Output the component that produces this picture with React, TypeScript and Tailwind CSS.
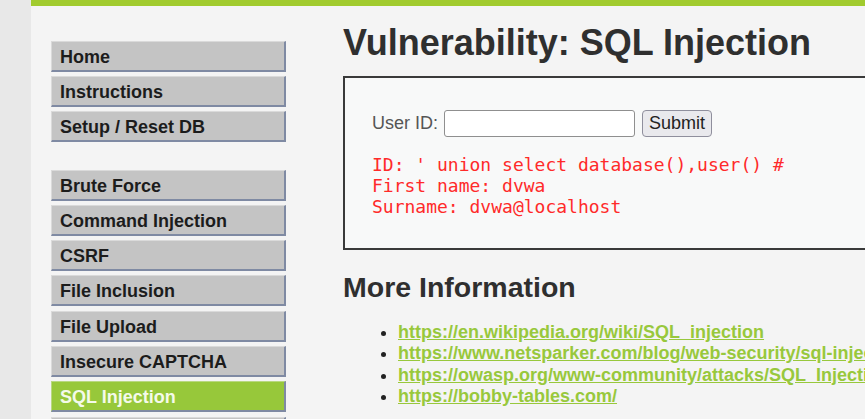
import React from "react";

const menuTop = ["Home", "Instructions", "Setup / Reset DB"];
const menuVulns = [
  "Brute Force",
  "Command Injection",
  "CSRF",
  "File Inclusion",
  "File Upload",
  "Insecure CAPTCHA",
  "SQL Injection",
  "SQL Injection (Blind)",
];

const links = [
  "https://en.wikipedia.org/wiki/SQL_injection",
  "https://www.netsparker.com/blog/web-security/sql-injection-cheat-sheet/",
  "https://owasp.org/www-community/attacks/SQL_Injection",
  "https://bobby-tables.com/",
];

function MenuItem({ label, selected }: { label: string; selected?: boolean }) {
  return (
    <li>
      <a
        href="#"
        className={
          selected
            ? "block h-[31px] border-l border-t border-r-2 border-b-2 border-l-[#b8d880] border-t-[#b8d880] border-r-[#7f8aa3] border-b-[#7f8aa3] bg-[#97c83a] pl-[8px] pt-[5px] font-bold leading-[21px] text-[#f4faea] no-underline"
            : "block h-[31px] border-l border-t border-r-2 border-b-2 border-l-[#dadada] border-t-[#dadada] border-r-[#7f8aa3] border-b-[#7f8aa3] bg-[#c4c4c4] pl-[8px] pt-[5px] font-bold leading-[21px] text-[#1c1c1c] no-underline"
        }
      >
        {label}
      </a>
    </li>
  );
}

export default function App() {
  return (
    <div className="flex h-[419px] w-[865px] overflow-hidden bg-[#e8e8e8] font-['Liberation_Sans',Arial,sans-serif] text-[18px]">
      <div className="w-[31px] shrink-0" />
      <div className="flex flex-1 border-t-[6px] border-[#a1cb2e] bg-[#f4f4f4]">
        {/* left menu */}
        <div className="ml-[20px] w-[235px] shrink-0 pt-[34.5px]">
          <ul className="flex flex-col gap-[4.3px]">
            {menuTop.map((m) => (
              <MenuItem key={m} label={m} />
            ))}
          </ul>
          <ul className="mt-[27.5px] flex flex-col gap-[4.3px]">
            {menuVulns.map((m) => (
              <MenuItem key={m} label={m} selected={m === "SQL Injection"} />
            ))}
          </ul>
        </div>

        {/* body */}
        <div className="ml-[57px] w-[620px] shrink-0 pt-[15.5px]">
          <h1 className="text-[36px] font-bold leading-[41px] text-[#2f2f2f]">Vulnerability: SQL Injection</h1>

          <div className="mt-[13px] h-[174px] border-2 border-[#3a3a3a] bg-[#f8f9f9] pl-[27px] pt-[32px]">
            <form className="flex items-center" onSubmit={(e) => e.preventDefault()}>
              <span className="text-[#555555]">User ID:</span>
              <input
                type="text"
                className="ml-[6px] h-[27px] w-[191px] rounded-[3px] border border-[#8f8f8f] bg-white px-1"
              />
              <button
                type="submit"
                className="ml-[7px] h-[27px] w-[70px] rounded-[4px] border border-[#8f8f9d] bg-[#e9e9ed] text-[18px] leading-none text-[#222]"
              >
                Submit
              </button>
            </form>
            <pre className="mt-[17px] font-['DejaVu_Sans_Mono',monospace] text-[18px] leading-[21px] text-[#ff2a2a]">
              {"ID: ' union select database(),user() #\nFirst name: dvwa\nSurname: dvwa@localhost"}
            </pre>
          </div>

          <h2 className="mt-[21px] text-[28.5px] font-bold leading-[33px] text-[#2f2f2f]">More Information</h2>
          <ul className="mt-[18.5px] list-disc pl-[55px] leading-[21.3px] marker:text-[#222]">
            {links.map((l) => (
              <li key={l} className="whitespace-nowrap">
                <a href="#" className="font-bold text-[#98c83c] underline">
                  {l}
                </a>
              </li>
            ))}
          </ul>
        </div>
      </div>
    </div>
  );
}
